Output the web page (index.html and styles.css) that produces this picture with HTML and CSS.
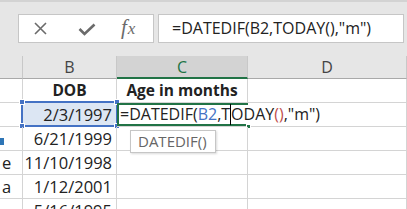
FILE: index.html
```html
<!DOCTYPE html>
<html lang="en">
<head>
    <meta charset="UTF-8">
    <title>DATEDIF</title>
    <link rel="stylesheet" href="styles.css">
</head>
<body>

<div class="chrome">
    <div class="formula-bar">
        <div class="fx-buttons">
            <svg class="icon-x" width="13" height="13" viewBox="0 0 13 13">
                <path d="M1 1 L12 12 M12 1 L1 12" stroke="#6b6b6b" stroke-width="1.6" fill="none"/>
            </svg>
            <svg class="icon-check" width="18" height="13" viewBox="0 0 18 13">
                <path d="M1.5 6 L6.5 11 L16.5 1.5" stroke="#6b6b6b" stroke-width="2.6" fill="none"/>
            </svg>
            <span class="fx">f<span class="fx-x">x</span></span>
        </div>
        <div class="formula-input">=DATEDIF(B2,TODAY(),"m")</div>
    </div>
</div>

<div class="sheet">
    <div class="col-head"></div>
    <div class="col-head">B</div>
    <div class="col-head active">C</div>
    <div class="col-head">D</div>

    <div class="cell"></div>
    <div class="cell head-text">DOB</div>
    <div class="cell head-text">Age in months</div>
    <div class="cell"></div>

    <div class="cell"></div>
    <div class="cell date selected">2/3/1997
        <div class="sel-box">
            <span class="handle tl"></span><span class="handle tr"></span>
            <span class="handle bl"></span><span class="handle br"></span>
        </div>
    </div>
    <div class="cell editing">
        <span class="formula">=DATEDIF(<span class="ref">B2</span>,T<span class="caret"></span>ODAY<span class="paren">()</span>,"m")</span>
        <span class="fill-handle"></span>
    </div>
    <div class="cell"></div>

    <div class="cell name"><span class="blue-bit"></span></div>
    <div class="cell date">6/21/1999</div>
    <div class="cell tip-cell"><div class="tooltip">DATEDIF()</div></div>
    <div class="cell"></div>

    <div class="cell name">e</div>
    <div class="cell date">11/10/1998</div>
    <div class="cell"></div>
    <div class="cell"></div>

    <div class="cell name">a</div>
    <div class="cell date">1/12/2001</div>
    <div class="cell"></div>
    <div class="cell"></div>

    <div class="cell name"></div>
    <div class="cell date">5/16/1995</div>
    <div class="cell"></div>
    <div class="cell"></div>
</div>

</body>
</html>
```

FILE: styles.css
```css
* {
    box-sizing: border-box;
}

body {
    margin: 0;
    width: 407px;
    height: 209px;
    overflow: hidden;
    background: #fff;
    font-family: 'Open Sans', 'Liberation Sans', sans-serif;
    color: #222;
}

.chrome {
    height: 56px;
    background: #e6e6e6;
    border-top: 2px solid #d3d3d3;
    padding-top: 12px;
}

.formula-bar {
    display: flex;
    gap: 4px;
    padding-left: 18px;
    height: 29px;
}

.fx-buttons {
    width: 136px;
    background: #fff;
    border: 1px solid #c6c6c6;
    display: flex;
    align-items: center;
    padding-left: 15px;
}

.icon-x {
    margin-right: 31px;
}

.icon-check {
    margin-right: 25px;
    margin-top: 1px;
}

.fx {
    font-family: 'Liberation Serif', serif;
    font-style: italic;
    font-size: 21px;
    color: #6b6b6b;
    margin-top: -3px;
    letter-spacing: 1px;
}

.fx-x {
    font-size: 17px;
}

.formula-input {
    width: 246px;
    background: #fff;
    border: 1px solid #c6c6c6;
    font-size: 16px;
    line-height: 27px;
    padding-left: 13px;
    white-space: nowrap;
}

.sheet {
    display: grid;
    grid-template-columns: 23px 94px 131px 1fr;
    grid-template-rows: 23px repeat(6, 24px);
}

.col-head {
    background: #e6e6e6;
    border-right: 1px solid #c8c8c8;
    border-bottom: 1px solid #a9a9a9;
    text-align: center;
    font-size: 16px;
    line-height: 22px;
    color: #444;
}

.col-head.active {
    background: #d3d3d3;
    color: #217346;
    border-bottom: 2px solid #217346;
}

.cell {
    position: relative;
    border-right: 1px solid #d4d4d4;
    border-bottom: 1px solid #d4d4d4;
    font-size: 16.5px;
    line-height: 23px;
    white-space: nowrap;
}

.head-text {
    font-weight: bold;
    font-size: 15.5px;
    text-align: center;
}

.date {
    text-align: right;
    padding-right: 4px;
}

.name {
    overflow: hidden;
    padding-left: 2px;
}

.blue-bit {
    display: inline-block;
    width: 4px;
    height: 7px;
    margin-left: -2px;
    background: #2e75b6;
}

.selected {
    background: #dce6f3;
}

.sel-box {
    position: absolute;
    left: -2px;
    top: -2px;
    right: -2px;
    bottom: -1px;
    border: 2px solid #4472c4;
}

.handle {
    position: absolute;
    width: 6px;
    height: 6px;
    background: #4472c4;
    border: 1px solid #fff;
}

.handle.tl { left: -4px; top: -4px; }
.handle.tr { right: -4px; top: -4px; }
.handle.bl { left: -4px; bottom: -4px; }
.handle.br { right: -4px; bottom: -4px; }

.editing {
    z-index: 2;
    overflow: visible;
    border-right: none;
    box-shadow: inset 2px 0 0 #217346, inset 0 2px 0 #217346, inset 0 -2px 0 #217346;
    padding-left: 3px;
    font-size: 16px;
}

.editing .formula {
    position: relative;
    z-index: 3;
}

.ref {
    color: #4472c4;
}

.paren {
    color: #c0504d;
}

.caret {
    display: inline-block;
    width: 1px;
    height: 21px;
    background: #000;
    vertical-align: -5px;
}

.fill-handle {
    position: absolute;
    right: -3px;
    bottom: -3px;
    width: 5px;
    height: 5px;
    background: #217346;
    border: 1px solid #fff;
}

.tip-cell {
    z-index: 4;
}

.tooltip {
    position: absolute;
    left: 13px;
    top: 3px;
    width: 86px;
    height: 23px;
    background: #fff;
    border: 1px solid #c6c6c6;
    box-shadow: 1px 1px 2px rgba(0, 0, 0, 0.15);
    color: #666;
    font-size: 15px;
    line-height: 21px;
    padding-left: 7px;
}
```
